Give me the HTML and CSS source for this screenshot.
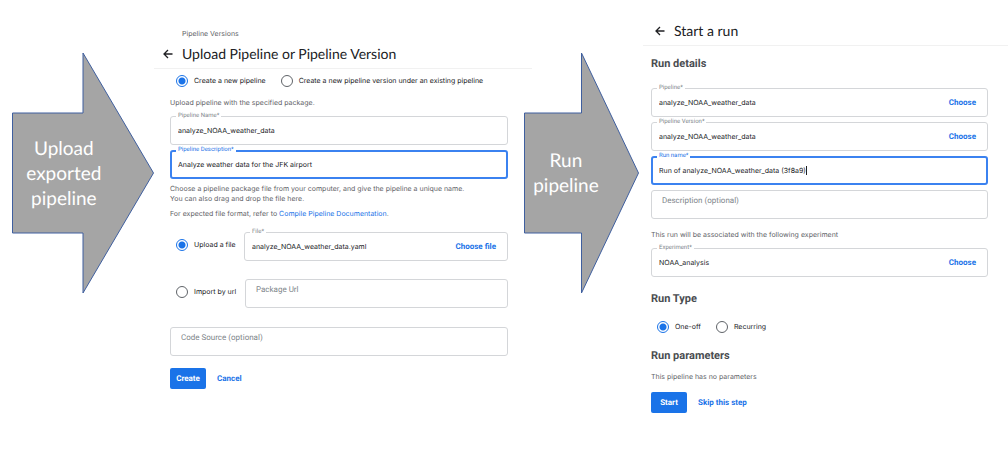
FILE: index.html
```html
<!DOCTYPE html>
<html lang="en">
<head>
<meta charset="utf-8">
<title>Upload and run a pipeline</title>
<link rel="stylesheet" href="styles.css">
</head>
<body>
<main class="steps">
  <div class="arrow">
    <svg class="arrow-shape" viewBox="0 0 142 242" preserveAspectRatio="none" aria-hidden="true"><path d="M.5 61H71V1L141.500 121 71 241V181H.5Z"/></svg>
    <p class="arrow-text">Upload exported pipeline</p>
  </div>

  <section class="panel">
    <header class="head head-upload">
      <p class="crumb">Pipeline Versions</p>
      <div class="title-row">
        <button class="back" type="button" aria-label="Back"><svg viewBox="0 0 10 10"><path d="M9.500 5H1M5 1 1 5l4 4"/></svg></button>
        <h1 class="title">Upload Pipeline or Pipeline Version</h1>
      </div>
    </header>
    <form class="form form-upload">
      <div class="radios">
        <label class="radio"><input type="radio" name="kind" checked>Create a new pipeline</label>
        <label class="radio"><input type="radio" name="kind">Create a new pipeline version under an existing pipeline</label>
      </div>
      <p class="text intro">Upload pipeline with the specified package.</p>
      <div class="field">
        <label class="tag" for="pname">Pipeline Name*</label>
        <input class="value" id="pname" type="text" value="analyze_NOAA_weather_data">
      </div>
      <div class="field active">
        <label class="tag" for="pdesc">Pipeline Description*</label>
        <input class="value" id="pdesc" type="text" value="Analyze weather data for the JFK airport">
      </div>
      <p class="text help">Choose a pipeline package file from your computer, and give the pipeline a unique name.<br>You can also drag and drop the file here.</p>
      <p class="text docs">For expected file format, refer to <a class="link" href="#docs">Compile Pipeline Documentation</a>.</p>
      <div class="source">
        <label class="radio"><input type="radio" name="source" checked>Upload a file</label>
        <div class="field">
          <label class="tag" for="file">File*</label>
          <input class="value" id="file" type="text" value="analyze_NOAA_weather_data.yaml">
          <button class="choose" type="button">Choose file</button>
        </div>
      </div>
      <div class="source source-url">
        <label class="radio"><input type="radio" name="source">Import by url</label>
        <div class="field empty">
          <input class="value" type="text" placeholder="Package Url" aria-label="Package Url">
        </div>
      </div>
      <div class="field empty code">
        <input class="value" type="text" placeholder="Code Source (optional)" aria-label="Code Source (optional)">
      </div>
      <div class="actions">
        <button class="primary" type="button">Create</button>
        <button class="plain" type="button">Cancel</button>
      </div>
    </form>
  </section>

  <div class="arrow arrow-run">
    <svg class="arrow-shape" viewBox="0 0 115 242" preserveAspectRatio="none" aria-hidden="true"><path d="M.5 61H57.500V1L114.500 121 57.500 241V181H.5Z"/></svg>
    <p class="arrow-text">Run pipeline</p>
  </div>

  <section class="panel">
    <header class="head head-run">
      <div class="title-row">
        <button class="back" type="button" aria-label="Back"><svg viewBox="0 0 10 10"><path d="M9.500 5H1M5 1 1 5l4 4"/></svg></button>
        <h1 class="title">Start a run</h1>
      </div>
    </header>
    <form class="form form-run">
      <h2 class="subhead">Run details</h2>
      <div class="field first">
        <label class="tag" for="pipeline">Pipeline*</label>
        <input class="value" id="pipeline" type="text" value="analyze_NOAA_weather_data">
        <button class="choose" type="button">Choose</button>
      </div>
      <div class="field">
        <label class="tag" for="version">Pipeline Version*</label>
        <input class="value" id="version" type="text" value="analyze_NOAA_weather_data">
        <button class="choose" type="button">Choose</button>
      </div>
      <div class="field active">
        <label class="tag" for="run">Run name*</label>
        <input class="value hug" id="run" type="text" value="Run of analyze_NOAA_weather_data (3f8a9)">
        <span class="caret"></span>
      </div>
      <div class="field empty">
        <input class="value" type="text" placeholder="Description (optional)" aria-label="Description (optional)">
      </div>
      <p class="text assoc">This run will be associated with the following experiment</p>
      <div class="field">
        <label class="tag" for="experiment">Experiment*</label>
        <input class="value" id="experiment" type="text" value="NOAA_analysis">
        <button class="choose" type="button">Choose</button>
      </div>
      <h2 class="subhead type">Run Type</h2>
      <div class="radios">
        <label class="radio"><input type="radio" name="type" checked>One-off</label>
        <label class="radio"><input type="radio" name="type">Recurring</label>
      </div>
      <h2 class="subhead params">Run parameters</h2>
      <p class="text none">This pipeline has no parameters</p>
      <div class="actions">
        <button class="primary" type="button">Start</button>
        <button class="plain" type="button">Skip this step</button>
      </div>
    </form>
  </section>
</main>
</body>
</html>
```
FILE: styles.css
```css
* { box-sizing: border-box; }
body, h1, h2, p { margin: 0; }
body { background: #fff; color: #202124; font: 7px/10px Inter, sans-serif; text-rendering: geometricPrecision; }
button, input { font: inherit; color: inherit; text-rendering: inherit; }
button { padding: 0; border: 0; background: none; cursor: pointer; }

.steps {
  display: grid;
  grid-template-columns: 142fr 370fr 115fr 369fr;
  align-items: start;
  padding-left: 12px;
}

/* Block arrows between the panels */
.arrow { display: grid; align-items: center; margin-top: 52px; }
.arrow > * { grid-area: 1 / 1; }
.arrow-shape { display: block; width: 100%; height: 242px; }
.arrow-shape path { fill: #a5a5a5; stroke: #3f5f9f; vector-effect: non-scaling-stroke; }
.arrow-text {
  width: 73%;
  padding: 0 12px;
  color: #fff;
  font: 19px/25px Lato, sans-serif;
  text-align: center;
}
.arrow-run .arrow-text { padding: 0; }

.panel { min-width: 0; }
.head { border-bottom: 1px solid #f1f1f1; }
.head-upload { margin-right: -8px; padding: 29px 0 5px 9px; }
.head-run { margin-left: 4px; padding: 21px 0 5px 12px; }
.crumb { padding-left: 19px; color: #5f6368; }
.title-row { display: flex; align-items: center; gap: 9px; margin-top: 5px; }
.head-run .title-row { margin-top: 0; }
.title { font: 400 14px/19px Lato, sans-serif; }
.back { display: block; width: 10px; height: 10px; }
.back svg { display: block; fill: none; stroke: #202124; stroke-width: 1.3; }

.form { display: flex; flex-direction: column; }
.form-upload { padding: 6px 16px 0; }
.form-run { padding: 11px 20px 0 12px; }
.text { color: #5f6368; }
.link { color: #1a73e8; text-decoration: none; }

.radios { display: flex; gap: 15px; padding-left: 6px; }
.radio { display: flex; align-items: center; gap: 6px; white-space: nowrap; }
.radio input {
  appearance: none;
  flex: none;
  width: 12px;
  height: 12px;
  margin: 0;
  border: 1px solid #5f6368;
  border-radius: 50%;
}
.radio input:checked {
  border-color: #1a73e8;
  background: radial-gradient(circle, #1a73e8 3px, #fff 4px);
}

.field {
  position: relative;
  display: flex;
  align-items: center;
  height: 29px;
  margin-bottom: 5px;
  padding: 0 11px 0 7px;
  border: 1px solid #d4d6d9;
  border-radius: 3px;
}
.tag {
  position: absolute;
  top: -5px;
  left: 5px;
  padding: 0 2px;
  background: #fff;
  color: #80868b;
  font: 6px/8px Roboto, sans-serif;
}
.value { flex: 1; min-width: 0; padding: 0; border: 0; outline: 0; background: none; }
.hug { flex: none; field-sizing: content; }
.caret { width: 1px; height: 9px; background: #202124; }
.field.active { border: 2px solid #3b82f0; padding-left: 6px; }
.active .tag { top: -6px; left: 4px; color: #1a73e8; }
.empty { align-items: flex-start; padding: 5px 10px; }
.empty .value { font: 8px/10px Roboto, sans-serif; }
.empty .value::placeholder { color: #80868b; opacity: 1; }
.choose, .plain, .primary { color: #1a73e8; font: 700 8px/10px Roboto, sans-serif; }

.intro { margin: 11px 0 8px; }
.docs { margin: 5px 0 13px; }
.source { display: grid; grid-template-columns: 62px 1fr; gap: 6px; padding-left: 6px; }
.source .radio { height: 26px; }
.source-url { margin: 13px 0 14px; grid-template-columns: 63px 1fr; }

.subhead { color: #4a4d51; font: 700 11px/14px Roboto, sans-serif; }
.first { margin-top: 17px; }
.assoc { margin: 6px 0 8px; }
.type { margin-top: 10px; }
.form-run .radios { margin: 15px 0 16px; }
.none { margin-top: 9px; }

.actions { display: flex; gap: 11px; margin-top: 7px; }
.form-run .actions { margin-top: 10px; }
.primary { width: 36px; height: 21px; border-radius: 2px; background: #1a73e8; color: #fff; }
```
